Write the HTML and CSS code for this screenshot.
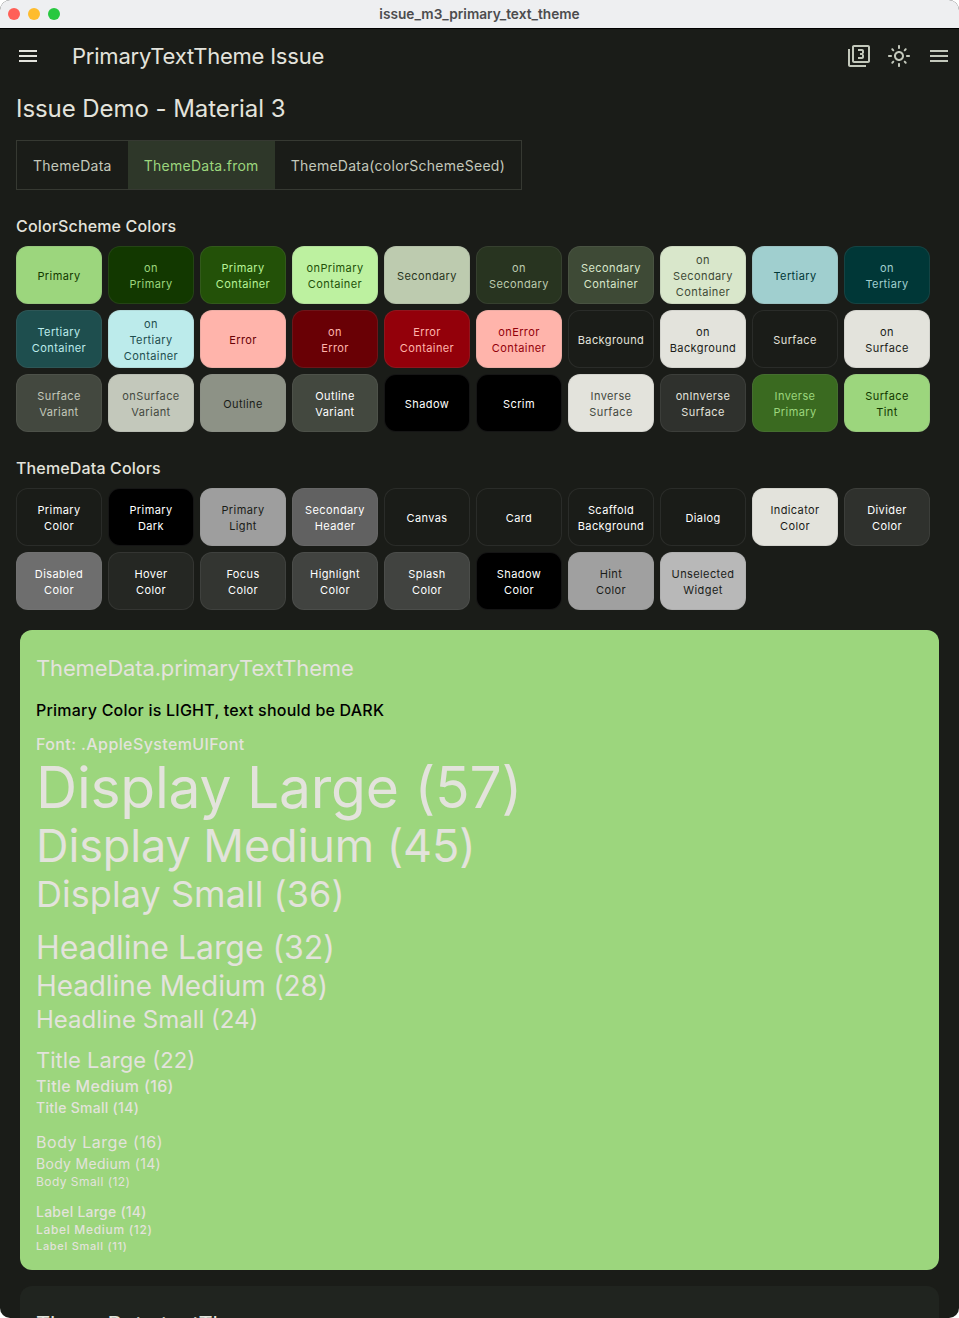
FILE: index.html
```html
<!DOCTYPE html>
<html lang="en">
<head>
<meta charset="utf-8">
<title>issue_m3_primary_text_theme</title>
<link rel="stylesheet" href="styles.css">
</head>
<body>
<div class="window">
  <header class="titlebar">
    <div class="lights"><span class="light red"></span><span class="light yellow"></span><span class="light green"></span></div>
    <div class="wintitle">issue_m3_primary_text_theme</div>
  </header>
  <div class="appbar">
    <button class="iconbtn lead"><svg viewBox="0 0 24 24"><path d="M3 18h18v-2H3v2zm0-5h18v-2H3v2zm0-7v2h18V6H3z"/></svg></button>
    <div class="apptitle">PrimaryTextTheme Issue</div>
    <div class="actions">
      <button class="iconbtn"><svg viewBox="0 0 24 24"><path d="M21 1H7c-1.1 0-2 .9-2 2v14c0 1.1.9 2 2 2h14c1.1 0 2-.9 2-2V3c0-1.1-.9-2-2-2zm0 16H7V3h14v14zM3 5H1v16c0 1.1.9 2 2 2h16v-2H3V5zm14 8v-1.5c0-.83-.67-1.5-1.5-1.5.83 0 1.5-.67 1.5-1.5V7c0-1.11-.9-2-2-2h-4v2h4v2h-2v2h2v2h-4v2h4c1.1 0 2-.89 2-2z"/></svg></button>
      <button class="iconbtn"><svg viewBox="0 0 24 24"><path d="M12 9c1.65 0 3 1.35 3 3s-1.35 3-3 3-3-1.35-3-3 1.35-3 3-3m0-2c-2.76 0-5 2.24-5 5s2.24 5 5 5 5-2.24 5-5-2.24-5-5-5zM2 13h2c.55 0 1-.45 1-1s-.45-1-1-1H2c-.55 0-1 .45-1 1s.45 1 1 1zm18 0h2c.55 0 1-.45 1-1s-.45-1-1-1h-2c-.55 0-1 .45-1 1s.45 1 1 1zM11 2v2c0 .55.45 1 1 1s1-.45 1-1V2c0-.55-.45-1-1-1s-1 .45-1 1zm0 18v2c0 .55.45 1 1 1s1-.45 1-1v-2c0-.55-.45-1-1-1s-1 .45-1 1zM5.99 4.58c-.39-.39-1.03-.39-1.41 0-.39.39-.39 1.03 0 1.41l1.06 1.06c.39.39 1.03.39 1.41 0s.39-1.03 0-1.41L5.99 4.58zm12.37 12.37c-.39-.39-1.03-.39-1.41 0-.39.39-.39 1.03 0 1.41l1.06 1.06c.39.39 1.03.39 1.41 0 .39-.39.39-1.03 0-1.41l-1.06-1.06zm1.06-10.96c.39-.39.39-1.03 0-1.41-.39-.39-1.03-.39-1.41 0l-1.06 1.06c-.39.39-.39 1.03 0 1.41s1.03.39 1.41 0l1.06-1.06zM7.05 18.36c.39-.39.39-1.03 0-1.41-.39-.39-1.03-.39-1.41 0l-1.06 1.06c-.39.39-.39 1.03 0 1.41s1.03.39 1.41 0l1.06-1.06z"/></svg></button>
      <button class="iconbtn"><svg viewBox="0 0 24 24"><path d="M3 18h18v-2H3v2zm0-5h18v-2H3v2zm0-7v2h18V6H3z"/></svg></button>
    </div>
  </div>
  <main class="content">
    <h1 class="pagehead">Issue Demo - Material 3</h1>
    <div class="segments">
      <div class="segment">ThemeData</div>
      <div class="segment selected">ThemeData.from</div>
      <div class="segment">ThemeData(colorSchemeSeed)</div>
    </div>
    <h2 class="section">ColorScheme Colors</h2>
    <div class="chips">
      <div class="chip c-primary">Primary</div>
      <div class="chip c-on-primary">on<br>Primary</div>
      <div class="chip c-primary-container">Primary<br>Container</div>
      <div class="chip c-on-primary-container">onPrimary<br>Container</div>
      <div class="chip c-secondary">Secondary</div>
      <div class="chip c-on-secondary">on<br>Secondary</div>
      <div class="chip c-secondary-container">Secondary<br>Container</div>
      <div class="chip c-on-secondary-container">on<br>Secondary<br>Container</div>
      <div class="chip c-tertiary">Tertiary</div>
      <div class="chip c-on-tertiary">on<br>Tertiary</div>
      <div class="chip c-tertiary-container">Tertiary<br>Container</div>
      <div class="chip c-on-tertiary-container">on<br>Tertiary<br>Container</div>
      <div class="chip c-error">Error</div>
      <div class="chip c-on-error">on<br>Error</div>
      <div class="chip c-error-container">Error<br>Container</div>
      <div class="chip c-on-error-container">onError<br>Container</div>
      <div class="chip c-background">Background</div>
      <div class="chip c-on-background">on<br>Background</div>
      <div class="chip c-background">Surface</div>
      <div class="chip c-on-background">on<br>Surface</div>
      <div class="chip c-surface-variant">Surface<br>Variant</div>
      <div class="chip c-on-surface-variant">onSurface<br>Variant</div>
      <div class="chip c-outline">Outline</div>
      <div class="chip c-outline-variant">Outline<br>Variant</div>
      <div class="chip c-black">Shadow</div>
      <div class="chip c-black">Scrim</div>
      <div class="chip c-inverse-surface">Inverse<br>Surface</div>
      <div class="chip c-on-inverse-surface">onInverse<br>Surface</div>
      <div class="chip c-inverse-primary">Inverse<br>Primary</div>
      <div class="chip c-primary">Surface<br>Tint</div>
    </div>
    <h2 class="section">ThemeData Colors</h2>
    <div class="chips">
      <div class="chip c-plain">Primary<br>Color</div>
      <div class="chip c-black">Primary<br>Dark</div>
      <div class="chip c-primary-light">Primary<br>Light</div>
      <div class="chip c-secondary-header">Secondary<br>Header</div>
      <div class="chip c-plain">Canvas</div>
      <div class="chip c-plain">Card</div>
      <div class="chip c-plain">Scaffold<br>Background</div>
      <div class="chip c-plain">Dialog</div>
      <div class="chip c-indicator">Indicator<br>Color</div>
      <div class="chip c-divider">Divider<br>Color</div>
      <div class="chip c-disabled">Disabled<br>Color</div>
      <div class="chip c-hover">Hover<br>Color</div>
      <div class="chip c-focus">Focus<br>Color</div>
      <div class="chip c-highlight">Highlight<br>Color</div>
      <div class="chip c-highlight">Splash<br>Color</div>
      <div class="chip c-black">Shadow<br>Color</div>
      <div class="chip c-hint">Hint<br>Color</div>
      <div class="chip c-unselected">Unselected<br>Widget</div>
    </div>
    <section class="panel primary-panel">
      <div class="t-panel-title">ThemeData.primaryTextTheme</div>
      <div class="note">Primary Color is LIGHT, text should be DARK</div>
      <div class="font-line">Font: .AppleSystemUIFont</div>
      <div class="type-group">
        <div class="t-display-large">Display Large (57)</div>
        <div class="t-display-medium">Display Medium (45)</div>
        <div class="t-display-small">Display Small (36)</div>
      </div>
      <div class="type-group">
        <div class="t-headline-large">Headline Large (32)</div>
        <div class="t-headline-medium">Headline Medium (28)</div>
        <div class="t-headline-small">Headline Small (24)</div>
      </div>
      <div class="type-group tight">
        <div class="t-title-large">Title Large (22)</div>
        <div class="t-title-medium">Title Medium (16)</div>
        <div class="t-title-small">Title Small (14)</div>
      </div>
      <div class="type-group">
        <div class="t-body-large">Body Large (16)</div>
        <div class="t-body-medium">Body Medium (14)</div>
        <div class="t-body-small">Body Small (12)</div>
      </div>
      <div class="type-group">
        <div class="t-label-large">Label Large (14)</div>
        <div class="t-label-medium">Label Medium (12)</div>
        <div class="t-label-small">Label Small (11)</div>
      </div>
    </section>
    <section class="panel next-panel">
      <div class="t-panel-title">ThemeData.textTheme</div>
    </section>
  </main>
</div>
</body>
</html>
```
FILE: styles.css
```css
html, body {
  margin: 0;
  height: 100%;
  overflow: hidden;
  background: #fff;
}
body {
  font-family: Inter, "Liberation Sans", sans-serif;
}
.window {
  height: 1318px;
  border-radius: 10px;
  overflow: hidden;
  background: #1a1c18;
  color: #e3e3dc;
  display: flex;
  flex-direction: column;
}
.titlebar {
  height: 29px;
  flex: none;
  box-sizing: border-box;
  background: #eeeff1;
  border-bottom: 1px solid #000;
  display: flex;
  align-items: center;
  justify-content: center;
  position: relative;
}
.lights {
  position: absolute;
  left: 8px;
  top: 8px;
  display: flex;
  gap: 8px;
}
.light {
  width: 12px;
  height: 12px;
  border-radius: 50%;
}
.red { background: #ff5f57; }
.yellow { background: #febc2e; }
.green { background: #28c840; }
.wintitle {
  font-size: 13.7px;
  font-weight: 600;
  color: #4c4c4e;
}
.appbar {
  height: 55px;
  box-sizing: border-box;
  padding-bottom: 1px;
  flex: none;
  display: flex;
  align-items: center;
}
.iconbtn {
  width: 40px;
  height: 40px;
  padding: 8px;
  border: 0;
  background: none;
  fill: #c3c8bb;
}
.iconbtn svg {
  display: block;
  width: 24px;
  height: 24px;
}
.iconbtn.lead {
  margin-left: 8px;
  fill: #e3e3dc;
}
.apptitle {
  margin-left: 24px;
  font-size: 22px;
  line-height: 28px;
  letter-spacing: -0.22px;
}
.actions {
  margin-left: auto;
  display: flex;
}
.content {
  flex: 1;
  padding: 9px 0 0 16px;
  min-height: 0;
}
.pagehead {
  margin: 0;
  font-size: 24px;
  line-height: 32px;
  font-weight: 400;
  letter-spacing: -0.06px;
}
.segments {
  display: inline-flex;
  margin-top: 15px;
  height: 50px;
  box-sizing: border-box;
  border: 1px solid #363932;
  vertical-align: top;
}
.segment {
  padding: 0 16px;
  display: flex;
  align-items: center;
  font-size: 14px;
  font-weight: 400;
  letter-spacing: 0.26px;
  color: #c3c8bb;
}
.segment.selected {
  background: #2e3729;
  color: #9cd67d;
}
.section {
  margin: 24px 0 8px;
  font-size: 16px;
  line-height: 24px;
  font-weight: 500;
  letter-spacing: 0.15px;
}
.chips {
  display: grid;
  grid-template-columns: repeat(10, 86px);
  grid-auto-rows: 58px;
  gap: 6px;
}
.chip {
  box-sizing: border-box;
  display: flex;
  align-items: center;
  justify-content: center;
  text-align: center;
  padding-top: 2px;
  border: 1px solid rgba(130, 130, 130, 0.16);
  border-radius: 12px;
  font-size: 11px;
  font-weight: 400;
  line-height: 16px;
  letter-spacing: 0.4px;
  white-space: nowrap;
}
.c-primary { background: #9cd67d; color: #123800; }
.c-on-primary { background: #123800; color: #9cd67d; }
.c-primary-container { background: #235108; color: #b8f397; }
.c-on-primary-container { background: #bdf1a0; color: #235108; }
.c-secondary { background: #bdcbaf; color: #283420; }
.c-on-secondary { background: #283420; color: #bdcbaf; }
.c-secondary-container { background: #3e4a36; color: #d9e7cb; }
.c-on-secondary-container { background: #d9e7cb; color: #3e4a36; }
.c-tertiary { background: #a0cfcf; color: #003737; }
.c-on-tertiary { background: #003737; color: #a0cfcf; }
.c-tertiary-container { background: #1e4e4e; color: #bcebeb; }
.c-on-tertiary-container { background: #bcebeb; color: #1e4e4e; }
.c-error { background: #ffb4ab; color: #690005; }
.c-on-error { background: #690005; color: #ffb4ab; }
.c-error-container { background: #93000a; color: #ffb4ab; }
.c-on-error-container { background: #ffb4ab; color: #93000a; }
.c-background { background: #1a1c18; color: #e3e3dc; }
.c-on-background { background: #e3e3dc; color: #1a1c18; }
.c-surface-variant { background: #43483f; color: #c3c8bb; }
.c-on-surface-variant { background: #c3c8bb; color: #43483f; }
.c-outline { background: #8d9286; color: #1a1c18; }
.c-outline-variant { background: #43483f; color: #fff; }
.c-black { background: #000; color: #fff; }
.c-inverse-surface { background: #e3e3dc; color: #43483f; }
.c-on-inverse-surface { background: #2f312d; color: #e3e3dc; }
.c-inverse-primary { background: #3a6a20; color: #9cd67d; }
.c-plain { background: #1a1c18; color: #fff; }
.c-primary-light { background: #9e9e9e; color: #1a1c18; }
.c-secondary-header { background: #616161; color: #fff; }
.c-indicator { background: #e3e3dc; color: #1a1c18; }
.c-divider { background: #2f312d; color: #fff; }
.c-disabled { background: #6e6e6e; color: #fff; }
.c-hover { background: #252723; color: #fff; }
.c-focus { background: #333531; color: #fff; }
.c-highlight { background: #414340; color: #fff; }
.c-hint { background: #a0a0a0; color: #1a1c18; }
.c-unselected { background: #b8b8b8; color: #1a1c18; }
.panel {
  margin: 20px 20px 0 4px;
  border-radius: 12px;
  box-sizing: border-box;
}
.primary-panel {
  background: #9cd67d;
  color: #e3e3dc;
  height: 640px;
  padding: 24px 16px 16px;
}
.next-panel {
  margin-top: 16px;
  height: 200px;
  background: #20241f;
  color: #e3e3dc;
  padding: 24px 16px 16px;
}
.note {
  margin-top: 16px;
  color: #000;
  font-size: 16px;
  line-height: 24px;
  font-weight: 500;
  letter-spacing: 0.22px;
}
.font-line {
  margin-top: 10px;
  font-size: 16px;
  line-height: 24px;
  font-weight: 500;
  letter-spacing: 0.4px;
}
.type-group + .type-group { margin-top: 12px; }
.type-group + .type-group.tight { margin-top: 10px; }
.t-panel-title { font-size: 22px; line-height: 28px; letter-spacing: -0.15px; }
.t-display-large { font-size: 57px; line-height: 64px; letter-spacing: -0.25px; }
.t-display-medium { font-size: 45px; line-height: 52px; letter-spacing: -0.1px; }
.t-display-small { font-size: 36px; line-height: 44px; letter-spacing: 0.05px; }
.t-headline-large { font-size: 32px; line-height: 40px; letter-spacing: -0.05px; }
.t-headline-medium { font-size: 28px; line-height: 36px; letter-spacing: -0.1px; }
.t-headline-small { font-size: 24px; line-height: 32px; }
.t-title-large { font-size: 22px; line-height: 28px; }
.t-title-medium { font-size: 16px; line-height: 24px; font-weight: 500; letter-spacing: 0.33px; }
.t-title-small { font-size: 14px; line-height: 20px; font-weight: 500; letter-spacing: 0.29px; }
.t-body-large { font-size: 16px; line-height: 24px; letter-spacing: 0.55px; }
.t-body-medium { font-size: 14px; line-height: 20px; letter-spacing: 0.3px; }
.t-body-small { font-size: 12px; line-height: 16px; letter-spacing: 0.45px; }
.t-label-large { font-size: 14px; line-height: 20px; font-weight: 500; letter-spacing: 0.23px; }
.t-label-medium { font-size: 12px; line-height: 16px; font-weight: 500; letter-spacing: 0.68px; }
.t-label-small { font-size: 11px; line-height: 16px; font-weight: 500; letter-spacing: 0.7px; }
```
